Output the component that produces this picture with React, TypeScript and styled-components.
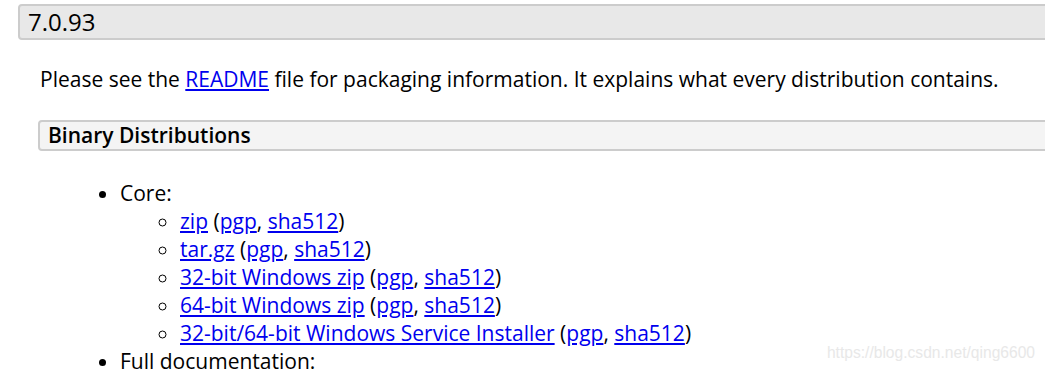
import * as React from 'react';
import styled, { createGlobalStyle } from "styled-components"

const GlobalStyle = createGlobalStyle`
  html, body {
    margin: 0;
    padding: 0;
    background: #ffffff;
    overflow: hidden;
  }
  body {
    font-family: "Open Sans", "Noto Sans", sans-serif;
    color: #000000;
  }
`

const Page = styled.div`
  position: relative;
  width: 1045px;
  height: 369px;
  overflow: hidden;
  padding-top: 4px;
  box-sizing: border-box;
`

const VersionHeading = styled.h3`
  margin: 0 -20px 0 18px;
  height: 36px;
  box-sizing: border-box;
  background: #e8e8e8;
  border: 2px solid #cccccc;
  border-radius: 4px;
  padding: 0 8px;
  font-size: 24px;
  font-weight: 400;
  line-height: 32px;
`

const Section = styled.div`
  padding-left: 38px;
`

const Intro = styled.p`
  margin: 24px 0 0 2px;
  font-size: 21px;
  line-height: 30px;
`

const SectionHeading = styled.h3`
  margin: 26px -20px 0 0;
  height: 31px;
  box-sizing: border-box;
  background: #f4f4f4;
  border: 2px solid #cccccc;
  border-radius: 4px;
  padding: 0 8px;
  font-size: 21px;
  font-weight: 600;
  line-height: 27px;
`

const List = styled.ul<{ $nested?: boolean }>`
  margin: ${p => (p.$nested ? "0" : "28px 0 0")};
  padding-left: ${p => (p.$nested ? "60px" : "82px")};
  list-style-type: ${p => (p.$nested ? "circle" : "disc")};
  font-size: 21px;
  line-height: 28px;
`

const Item = styled.li``

const Link = styled.a`
  color: #0000ee;
  text-decoration: underline;
`

const Watermark = styled.div`
  position: absolute;
  right: 10px;
  bottom: 7px;
  font-family: "Liberation Sans", Arial, sans-serif;
  font-size: 15.6px;
  color: #e8e8e8;
`

const downloads = [
  "zip",
  "tar.gz",
  "32-bit Windows zip",
  "64-bit Windows zip",
  "32-bit/64-bit Windows Service Installer",
]

export default function App(): JSX.Element {
  return (
    <Page>
      <GlobalStyle />
      <VersionHeading>7.0.93</VersionHeading>
      <Section>
        <Intro>
          Please see the <Link href="#">README</Link> file for packaging information. It explains what every distribution contains.
        </Intro>
        <SectionHeading>Binary Distributions</SectionHeading>
        <List>
          <Item>
            Core:
            <List $nested>
              {downloads.map(d => (
                <Item key={d}>
                  <Link href="#">{d}</Link> (<Link href="#">pgp</Link>, <Link href="#">sha512</Link>)
                </Item>
              ))}
            </List>
          </Item>
          <Item>Full documentation:</Item>
        </List>
      </Section>
      <Watermark>https://blog.csdn.net/qing6600</Watermark>
    </Page>
  )
}
